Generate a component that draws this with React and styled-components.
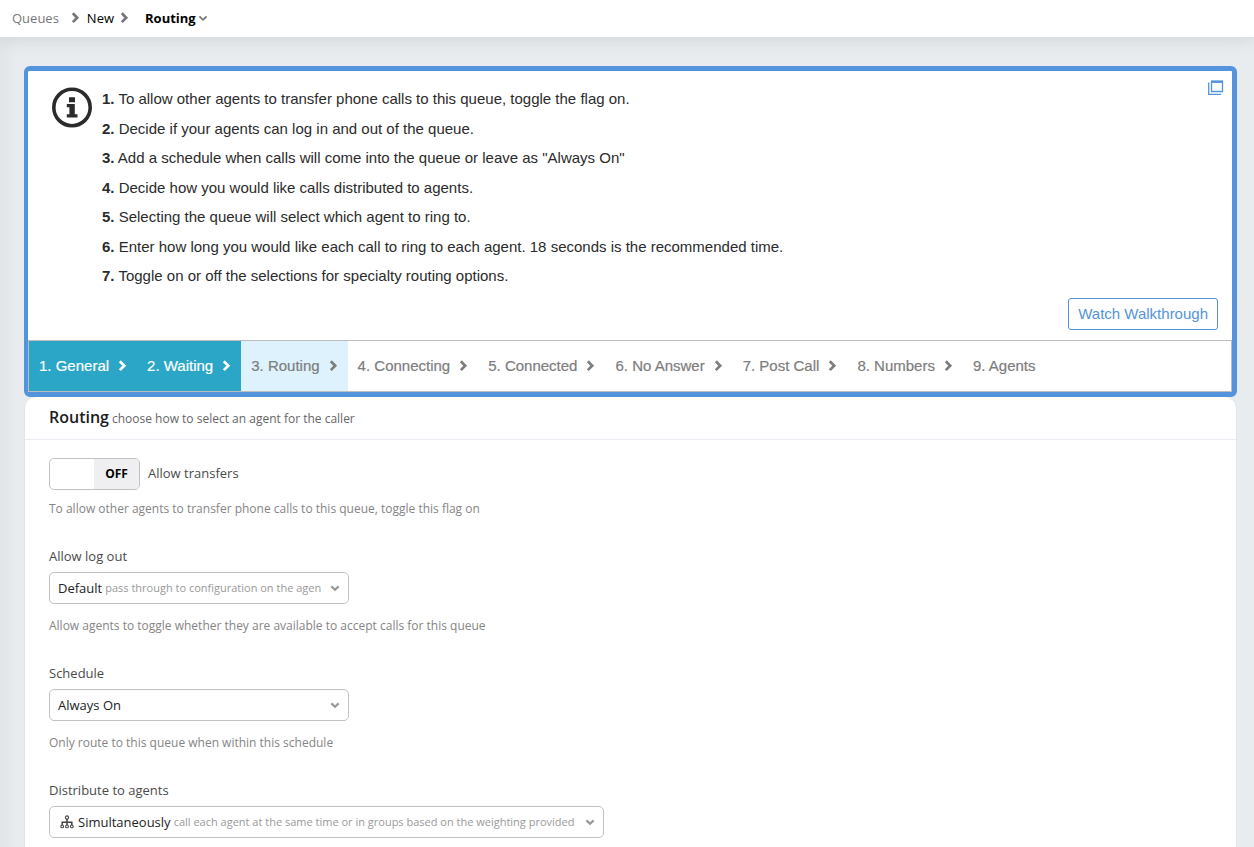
import React, { useState } from 'react';
import styled, { createGlobalStyle } from 'styled-components';

const GlobalStyle = createGlobalStyle`
  * {
    box-sizing: border-box;
  }
  body {
    margin: 0;
    background: #e8ecef;
    font-family: 'Open Sans', 'Noto Sans', sans-serif;
    font-size: 13px;
    line-height: 20px;
    color: #4a4a4a;
  }
`;

const Page = styled.div`
  display: flex;
  flex-direction: column;
  min-height: 100vh;
`;

const TopBar = styled.nav`
  position: relative;
  display: flex;
  align-items: center;
  height: 37px;
  padding: 0 12px 2px;
  background: #fff;
  box-shadow: 0 0 20px rgba(0, 0, 0, 0.13);
`;

const Crumb = styled.a`
  margin-right: ${(props) => props.$gap}px;
  color: ${(props) => (props.$muted ? '#777' : '#000')};
  text-decoration: none;
`;

const CrumbButton = styled.button`
  display: flex;
  align-items: center;
  gap: 2px;
  padding: 0;
  border: 0;
  background: none;
  font: inherit;
  font-weight: 700;
  color: #000;
`;

const Separator = styled.span`
  display: flex;
  margin-right: ${(props) => props.$gap}px;
`;

const Content = styled.main`
  display: flex;
  flex: 1;
  flex-direction: column;
  padding: 29px 17px 0 24px;
  background: linear-gradient(to right, rgba(0, 0, 0, 0.03), transparent 18px);
`;

const Guide = styled.section`
  border: 5px solid #5494dc;
  border-left-width: 4px;
  border-radius: 6px;
  background: #fff;
  font-family: 'Liberation Sans', Arial, sans-serif;
  font-size: 15px;
  color: #2b2b2b;
`;

const GuideTop = styled.div`
  display: flex;
  align-items: flex-start;
  gap: 10px;
  padding: 9px 8px 0 24px;
`;

const InfoIcon = styled.svg`
  flex: none;
  margin-top: 7px;
`;

const Instructions = styled.ol`
  display: grid;
  flex: 1;
  align-content: space-between;
  min-height: 197px;
  margin: 9px 0 0;
  padding: 0;
  list-style: none;
`;

const IconButton = styled.button`
  display: flex;
  padding: 0;
  border: 0;
  background: none;
`;

const GuideActions = styled.div`
  display: flex;
  justify-content: flex-end;
  padding: 12px 14px 10px;
`;

const Walkthrough = styled.button`
  height: 32px;
  padding: 0 9px;
  border: 1px solid #5494dc;
  border-radius: 3px;
  background: #fff;
  font: inherit;
  color: #5494dc;
`;

const Steps = styled.nav`
  display: flex;
  height: 52px;
  border: 1px solid #bdbdbd;
`;

const stepColors = {
  done: ['#2ba6c6', '#fff'],
  active: ['#def2fd', '#7d7d7d'],
  todo: ['#fff', '#7d7d7d'],
};

const Step = styled.a`
  display: flex;
  align-items: center;
  gap: 9px;
  padding: 0 10px;
  background: ${(props) => stepColors[props.$state][0]};
  color: ${(props) => stepColors[props.$state][1]};
  -webkit-text-stroke: 0.2px currentColor;
  text-decoration: none;
  white-space: nowrap;
`;

const Card = styled.section`
  flex: 1;
  border: 1px solid #e1e4ea;
  border-width: 0 1px;
  border-radius: 12px 12px 0 0;
  background: #fff;
`;

const CardHeader = styled.header`
  display: flex;
  align-items: baseline;
  gap: 3px;
  padding: 8px 24px;
  border-bottom: 1px solid #ebecf3;
  font-size: 12px;
  line-height: 25px;
  color: #666;
`;

const Title = styled.h1`
  margin: 0;
  font-size: 16px;
  font-weight: 600;
  color: #1c1c1c;
`;

const Form = styled.form`
  display: flex;
  flex-direction: column;
  gap: 27px;
  padding: 18px 24px 0;
`;

const Hint = styled.p`
  margin: ${(props) => props.$top || 12}px 0 0;
  font-size: 12px;
  color: #858585;
`;

const ToggleLabel = styled.label`
  display: flex;
  align-items: center;
  gap: 8px;
  width: fit-content;
`;

const ToggleText = styled.span`
  padding-bottom: 2px;
`;

const HiddenCheckbox = styled.input`
  position: absolute;
  opacity: 0;
`;

const Track = styled.span`
  display: flex;
  justify-content: ${(props) => (props.$on ? 'flex-start' : 'flex-end')};
  width: 91px;
  height: 32px;
  border: 1px solid #c2c2c2;
  border-radius: 5px;
  background: #fff;
  overflow: hidden;
`;

const TrackText = styled.span`
  width: 45px;
  background: #efeff1;
  font-size: 12px;
  font-weight: 700;
  line-height: 29px;
  text-align: center;
  color: #000;
`;

const FieldLabel = styled.label`
  display: block;
  margin-bottom: 6px;
`;

const SelectBox = styled.div`
  display: flex;
  align-items: center;
  width: ${(props) => props.$width};
  max-width: 100%;
  height: 32px;
  padding: 0 8px;
  border: 1px solid #c2c2c2;
  border-radius: 5px;
  background: #fff;
`;

const Select = styled.select`
  flex: ${(props) => (props.$grow ? 1 : 'none')};
  field-sizing: content;
  appearance: none;
  padding: 0;
  border: 0;
  outline: 0;
  background: none;
  font: inherit;
  color: #222;
`;

const Detail = styled.span`
  flex: 1;
  margin: 0 8px 0 3px;
  overflow: hidden;
  white-space: nowrap;
  font-size: 11px;
  color: #999;
`;

const TreeIcon = styled.svg`
  flex: none;
  margin: 0 4px 0 2px;
`;

const instructions = [
  'To allow other agents to transfer phone calls to this queue, toggle the flag on.',
  'Decide if your agents can log in and out of the queue.',
  'Add a schedule when calls will come into the queue or leave as "Always On"',
  'Decide how you would like calls distributed to agents.',
  'Selecting the queue will select which agent to ring to.',
  'Enter how long you would like each call to ring to each agent. 18 seconds is the recommended time.',
  'Toggle on or off the selections for specialty routing options.',
];

const steps = [
  'General',
  'Waiting',
  'Routing',
  'Connecting',
  'Connected',
  'No Answer',
  'Post Call',
  'Numbers',
  'Agents',
];
const current = 2;

const ChevronRight = ({ color = 'currentColor' }) => (
  <svg width="9" height="12" viewBox="0 0 9 12" fill="none" aria-hidden="true">
    <path d="M1.8 1.3 6.2 5.7 1.8 10.1" stroke={color} strokeWidth="2.7" />
  </svg>
);

const ChevronDown = ({ color = '#999', weight = 2.2 }) => (
  <svg width="10" height="8" viewBox="0 0 10 8" fill="none" aria-hidden="true">
    <path d="M1.4 2.4 5 5.8 8.6 2.4" stroke={color} strokeWidth={weight} />
  </svg>
);

const Tree = () => (
  <TreeIcon
    width="14"
    height="14"
    viewBox="0 0 14 14"
    fill="none"
    stroke="#444"
    strokeWidth="1.1"
    aria-hidden="true"
  >
    <circle cx="7" cy="2.5" r="1.6" />
    <path d="M7 4v6M2.2 10V7.2h9.6V10" strokeWidth="1.5" />
    <circle cx="2.2" cy="11.4" r="1.4" />
    <circle cx="7" cy="11.4" r="1.4" />
    <circle cx="11.8" cy="11.4" r="1.4" />
  </TreeIcon>
);

const SelectField = ({ id, label, hint, options, icon, width }) => {
  const [value, setValue] = useState(options[0].name);
  const selected = options.find((option) => option.name === value);
  return (
    <div>
      <FieldLabel htmlFor={id}>{label}</FieldLabel>
      <SelectBox $width={width}>
        {icon}
        <Select
          id={id}
          value={value}
          $grow={!selected.detail}
          onChange={(e) => setValue(e.target.value)}
        >
          {options.map((option) => (
            <option key={option.name}>{option.name}</option>
          ))}
        </Select>
        {selected.detail && <Detail>{selected.detail}</Detail>}
        <ChevronDown />
      </SelectBox>
      {hint && <Hint>{hint}</Hint>}
    </div>
  );
};

const App = () => {
  const [transfers, setTransfers] = useState(false);
  return (
    <Page>
      <GlobalStyle />
      <TopBar aria-label="Breadcrumb">
        <Crumb href="#queues" $muted $gap={12}>
          Queues
        </Crumb>
        <Separator $gap={7}>
          <ChevronRight color="#777" />
        </Separator>
        <Crumb href="#new" $gap={6}>
          New
        </Crumb>
        <Separator $gap={16}>
          <ChevronRight color="#777" />
        </Separator>
        <CrumbButton type="button">
          Routing
          <ChevronDown color="#777" weight={1.8} />
        </CrumbButton>
      </TopBar>
      <Content>
        <Guide>
          <GuideTop>
            <InfoIcon width="40" height="42" viewBox="0 0 40 42" aria-hidden="true">
              <circle cx="20" cy="20.5" r="18.2" fill="none" stroke="#2b2b2b" strokeWidth="3.6" />
              <path
                d="M17 10.3h6v5h-6zM14.8 17h8v10.3h2.7v3.2H14.8v-3.2h2.6v-7h-2.6z"
                fill="#2b2b2b"
              />
            </InfoIcon>
            <Instructions>
              {instructions.map((text, i) => (
                <li key={text}>
                  <b>{i + 1}.</b> {text}
                </li>
              ))}
            </Instructions>
            <IconButton type="button" aria-label="Open in window">
              <svg width="16" height="16" viewBox="0 0 16 16" fill="none" stroke="#5494dc">
                <path d="M3.5 1.5h11v10h-11z" strokeWidth="1.3" />
                <path d="M3 1.7h12" strokeWidth="2.4" />
                <path d="M.7 2.5v11.8h12.3" strokeWidth="1.3" />
              </svg>
            </IconButton>
          </GuideTop>
          <GuideActions>
            <Walkthrough type="button">Watch Walkthrough</Walkthrough>
          </GuideActions>
          <Steps aria-label="Steps">
            {steps.map((name, i) => (
              <Step
                key={name}
                href={`#step-${i + 1}`}
                $state={i < current ? 'done' : i === current ? 'active' : 'todo'}
              >
                {i + 1}. {name}
                {i < steps.length - 1 && <ChevronRight />}
              </Step>
            ))}
          </Steps>
        </Guide>
        <Card>
          <CardHeader>
            <Title>Routing</Title>
            choose how to select an agent for the caller
          </CardHeader>
          <Form>
            <div>
              <ToggleLabel>
                <HiddenCheckbox
                  type="checkbox"
                  checked={transfers}
                  onChange={(e) => setTransfers(e.target.checked)}
                />
                <Track $on={transfers}>
                  <TrackText>{transfers ? 'ON' : 'OFF'}</TrackText>
                </Track>
                <ToggleText>Allow transfers</ToggleText>
              </ToggleLabel>
              <Hint $top={9}>
                To allow other agents to transfer phone calls to this queue, toggle this flag on
              </Hint>
            </div>
            <SelectField
              id="logout"
              label="Allow log out"
              width="300px"
              options={[{ name: 'Default', detail: 'pass through to configuration on the agen' }]}
              hint="Allow agents to toggle whether they are available to accept calls for this queue"
            />
            <SelectField
              id="schedule"
              label="Schedule"
              width="300px"
              options={[{ name: 'Always On' }]}
              hint="Only route to this queue when within this schedule"
            />
            <SelectField
              id="distribute"
              label="Distribute to agents"
              width="555px"
              icon={<Tree />}
              options={[
                {
                  name: 'Simultaneously',
                  detail:
                    'call each agent at the same time or in groups based on the weighting provided',
                },
              ]}
            />
          </Form>
        </Card>
      </Content>
    </Page>
  );
};

export default App;
